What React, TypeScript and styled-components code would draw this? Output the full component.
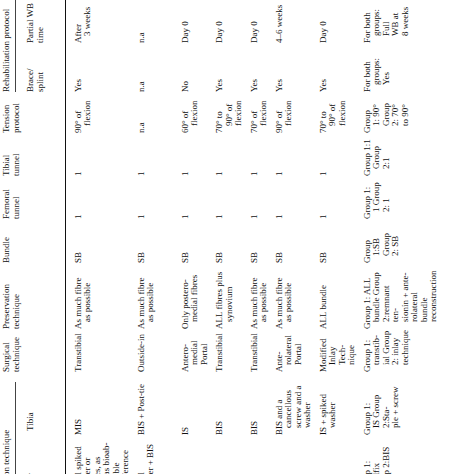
import React from 'react';
import styled, { createGlobalStyle } from 'styled-components';

const GlobalStyle = createGlobalStyle`
    html, body {
        margin: 0;
        padding: 0;
        background: #fff;
    }
    body {
        overflow: hidden;
    }
`;

const Page = styled.div`
    width: 474px;
    height: 474px;
    overflow: hidden;
    background: #fff;
`;

// the table is printed sideways, so it is laid out upright and turned
const Sideways = styled.div`
    width: 504px;
    transform-origin: 0 0;
    transform: translate(0, 497px) rotate(-90deg);
`;

const Table = styled.table`
    width: 504px;
    table-layout: fixed;
    border-collapse: collapse;
    font-family: 'Liberation Serif', 'Times New Roman', serif;
    font-size: 9px;
    line-height: 9.5px;
    color: #111;

    tbody tr:first-child td {
        border-top: 1.6px solid #111;
        padding-top: 8px;
    }
`;

const HeadRow = styled.tr<{ $height: number }>`
    height: ${p => p.$height}px;
`;

const HeadCell = styled.th<{ $inset?: number }>`
    text-align: left;
    font-weight: normal;
    vertical-align: top;
    white-space: nowrap;
    padding: 2px 0 0 ${p => p.$inset ?? 4}px;
`;

const SubHeadCell = styled(HeadCell)`
    padding-top: 10px;
`;

const GroupLabel = styled.div`
    padding-bottom: 3px;
    margin-right: 6px;
    border-bottom: 1px solid #444;
`;

const Cell = styled.td`
    vertical-align: top;
    white-space: nowrap;
    padding: 3px 0 3px 4px;
`;

const Line = styled.div<{ $indent: boolean }>`
    min-height: 9.5px;
    padding-left: ${p => (p.$indent ? 7 : 0)}px;
`;

const widths = [58, 63, 43, 66, 44, 43, 43, 41, 49, 54];

type CellLines = string[];

const rows: CellLines[][] = [
    [
        ['Metal spiked', 'washer or', 'staples, as', 'well as bioab-', 'sorbable', 'interference'],
        ['MIS'], ['Transtibial'], ['As much fibre', 'as possible'], ['SB'], ['1'], ['1'],
        ['90° of', 'flexion'], ['Yes'], ['After', '3 weeks'],
    ],
    [
        ['Metal', 'washer + BIS', '', ''],
        ['BIS + Post-tie'], ['Outside-in'], ['As much fibre', 'as possible'], ['SB'], ['1'], ['1'],
        ['n.a'], ['n.a'], ['n.a'],
    ],
    [
        [], ['IS'], ['Antero-', 'medial', 'Portal'], ['Only postero-', 'medial fibres'], ['SB'], ['1'], ['1'],
        ['60° of', 'flexion'], ['No'], ['Day 0'],
    ],
    [
        [], ['BIS'], ['Transtibial'], ['ALL fibres plus', 'synovium'], ['SB'], ['1'], ['1'],
        ['70° to', '90° of', 'flexion'], ['Yes'], ['Day 0'],
    ],
    [
        [], ['BIS'], ['Transtibial'], ['As much fibre', 'as possible'], ['SB'], ['1'], ['1'],
        ['70° of', 'flexion'], ['Yes'], ['Day 0'],
    ],
    [
        [], ['BIS and a', 'cancellous', 'screw and a', 'washer'], ['Ante-', 'rolateral', 'Portal'],
        ['As much fibre', 'as possible'], ['SB'], ['1'], ['1'],
        ['90° of', 'flexion'], ['Yes'], ['4–6 weeks'],
    ],
    [
        [], ['IS + spiked', 'washer'], ['Modified', 'Inlay', 'Tech-', 'nique'], ['ALL bundle'], ['SB'], ['1'], ['1'],
        ['70° to', '90° of', 'flexion'], ['Yes'], ['Day 0'],
    ],
    [
        ['Group 1:', 'Rigidfix', 'Group 2:BIS'],
        ['Group 1:', 'IS Group', '2:Sta-', 'ple + screw'],
        ['Group 1:', 'transtib-', 'ial Group', '2: inlay', 'technique'],
        ['Group 1: ALL', 'bundle Group', '2:remnant', 'ten-', 'sionin + ante-', 'rolateral', 'bundle', 'reconstruction'],
        ['Group', '1:SB', 'Group', '2: SB'],
        ['Group 1:', '1 Group', '2: 1'],
        ['Group 1:1', 'Group', '2:1'],
        ['Group', '1: 90°', 'Group', '2: 70°', 'to 90°'],
        ['For both', 'groups:', 'Yes'],
        ['For both', 'groups:', 'Full', 'WB at', '8 weeks'],
    ],
];

const Lines: React.FC<{ lines: string[]; hanging: boolean }> = ({ lines, hanging }) => (
    <>
        {lines.map((text, i) => (
            <Line key={i} $indent={hanging && i > 0}>{text || '\u00a0'}</Line>
        ))}
    </>
);

export default function App() {
    return (
        <Page>
            <GlobalStyle />
            <Sideways>
                <Table>
                    <colgroup>
                        {widths.map((w, i) => <col key={i} style={{ width: w }} />)}
                    </colgroup>
                    <thead>
                        <HeadRow $height={16}>
                            <HeadCell colSpan={2} $inset={0}><GroupLabel>Fixation technique</GroupLabel></HeadCell>
                            <HeadCell rowSpan={2}>Surgical<br />technique</HeadCell>
                            <HeadCell rowSpan={2}>Preservation<br />technique</HeadCell>
                            <HeadCell rowSpan={2}>Bundle</HeadCell>
                            <HeadCell rowSpan={2}>Femoral<br />tunnel</HeadCell>
                            <HeadCell rowSpan={2}>Tibial<br />tunnel</HeadCell>
                            <HeadCell rowSpan={2}>Tension<br />protocol</HeadCell>
                            <HeadCell colSpan={2}><GroupLabel>Rehabilitation protocol</GroupLabel></HeadCell>
                        </HeadRow>
                        <HeadRow $height={49}>
                            <SubHeadCell $inset={0}>Femur</SubHeadCell>
                            <SubHeadCell $inset={8}>Tibia</SubHeadCell>
                            <SubHeadCell>Brace/<br />splint</SubHeadCell>
                            <SubHeadCell>Partial WB<br />time</SubHeadCell>
                        </HeadRow>
                    </thead>
                    <tbody>
                        {rows.map((row, r) => (
                            <tr key={r}>
                                {row.map((lines, c) => (
                                    <Cell key={c}>
                                        <Lines lines={lines} hanging={c > 0} />
                                    </Cell>
                                ))}
                            </tr>
                        ))}
                    </tbody>
                </Table>
            </Sideways>
        </Page>
    );
}
